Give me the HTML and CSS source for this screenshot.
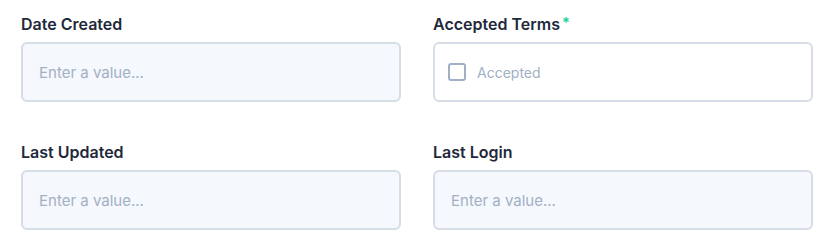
FILE: index.html
```html
<!DOCTYPE html>
<html lang="en">
<head>
  <meta charset="UTF-8" />
  <meta name="viewport" content="width=device-width, initial-scale=1.0" />
  <title>Fields</title>
  <link rel="stylesheet" href="styles.css">
</head>
<body>
  <form class="form-grid">
    <div class="field">
      <label class="field-label">Date Created</label>
      <input class="field-input" type="text" placeholder="Enter a value...">
    </div>

    <div class="field">
      <label class="field-label">Accepted Terms<span class="required">*</span></label>
      <label class="field-check">
        <span class="check-box"></span>
        <span class="check-text">Accepted</span>
      </label>
    </div>

    <div class="field">
      <label class="field-label">Last Updated</label>
      <input class="field-input" type="text" placeholder="Enter a value...">
    </div>

    <div class="field">
      <label class="field-label">Last Login</label>
      <input class="field-input" type="text" placeholder="Enter a value...">
    </div>
  </form>
</body>
</html>
```

FILE: styles.css
```css
* {
  margin: 0;
  padding: 0;
  box-sizing: border-box;
}

body {
  background: #ffffff;
  font-family: 'Inter', sans-serif;
  color: #1e293b;
  padding: 14px 0 0 21px;
}

.form-grid {
  display: grid;
  grid-template-columns: 380px 380px;
  column-gap: 32px;
  row-gap: 40px;
}

.field {
  display: flex;
  flex-direction: column;
  gap: 8px;
}

.field-label {
  font-size: 16px;
  line-height: 20px;
  height: 20px;
  font-weight: 600;
  color: #1e293b;
}

.required {
  color: #1ed69a;
  font-size: 14px;
  line-height: 14px;
  font-weight: 700;
  vertical-align: 2px;
  margin-left: 2px;
}

.field-input {
  height: 60px;
  width: 100%;
  border: 2px solid #d6dde7;
  border-radius: 6px;
  background: #f5f8fc;
  padding: 0 16px;
  font-family: 'Inter', sans-serif;
  font-size: 15px;
  color: #1e293b;
  outline: none;
}

.field-input::placeholder {
  color: #a2b0c5;
}

.field-check {
  height: 60px;
  display: flex;
  align-items: center;
  gap: 11px;
  border: 2px solid #d6dde7;
  border-radius: 6px;
  background: #ffffff;
  padding: 0 13px;
}

.check-box {
  width: 18px;
  height: 18px;
  border: 2px solid #a2b0c5;
  border-radius: 3px;
}

.check-text {
  font-size: 14px;
  color: #a2b0c5;
}
```
